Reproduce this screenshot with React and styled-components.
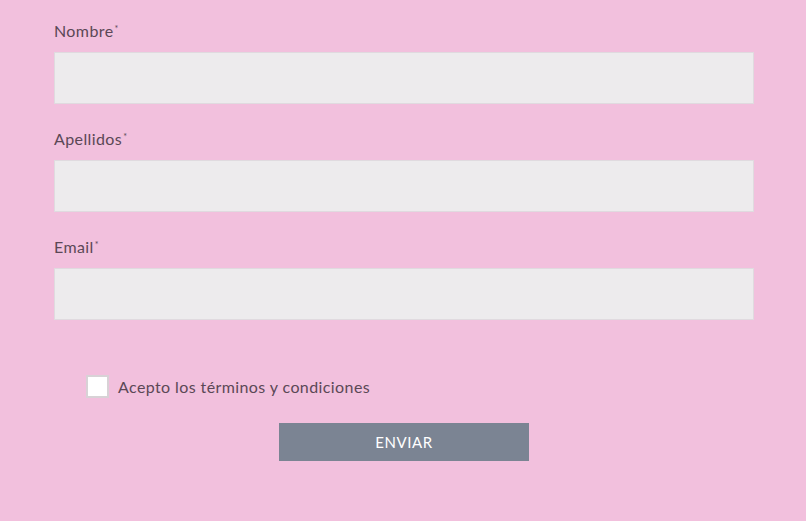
import React from 'react';
import styled, { createGlobalStyle } from 'styled-components';

const GlobalStyle = createGlobalStyle`
  html, body {
    margin: 0;
    padding: 0;
    background: #f2c0dd;
  }
  body {
    font-family: Lato, "Open Sans", "Liberation Sans", sans-serif;
  }
`;

const Page = styled.div`
  min-height: 521px;
  background: #f2c0dd;
  padding: 21px 52px 0 54px;
  box-sizing: border-box;
`;

const Form = styled.form`
  display: flex;
  flex-direction: column;
  width: 700px;
`;

const Field = styled.div`
  display: flex;
  flex-direction: column;
  margin-bottom: 25px;
`;

const Label = styled.label`
  font-size: 16px;
  line-height: 20px;
  letter-spacing: 0.4px;
  color: #5b4856;
  margin-bottom: 11px;

  sup {
    font-size: 9px;
    vertical-align: top;
    position: relative;
    top: -2px;
    margin-left: 1px;
  }
`;

const Input = styled.input`
  height: 52px;
  box-sizing: border-box;
  background: #edebed;
  border: 1px solid #e0dadf;
  outline: none;
  padding: 0 12px;
  font-size: 16px;
  font-family: inherit;
`;

const CheckRow = styled.label`
  display: flex;
  align-items: center;
  gap: 9px;
  margin: 30px 0 0 32px;
  font-size: 16px;
  letter-spacing: 0.4px;
  color: #5b4856;
`;

const Box = styled.input`
  appearance: none;
  margin: 0;
  width: 23px;
  height: 23px;
  box-sizing: border-box;
  background: #fff;
  border: 2px solid #d8d2d6;
`;

const Submit = styled.button`
  align-self: center;
  margin: 25px 0 0 0;
  width: 250px;
  height: 38px;
  border: none;
  background: #7b8493;
  color: #fff;
  font-family: inherit;
  font-size: 15px;
  letter-spacing: 0.6px;
  cursor: pointer;
`;

const fields = ['Nombre', 'Apellidos', 'Email'];

export default function App() {
  return (
    <>
      <GlobalStyle />
      <Page>
        <Form onSubmit={(e) => e.preventDefault()}>
          {fields.map((f) => (
            <Field key={f}>
              <Label>
                {f}
                <sup>*</sup>
              </Label>
              <Input type={f === 'Email' ? 'email' : 'text'} />
            </Field>
          ))}
          <CheckRow>
            <Box type="checkbox" />
            Acepto los términos y condiciones
          </CheckRow>
          <Submit type="submit">ENVIAR</Submit>
        </Form>
      </Page>
    </>
  );
}
